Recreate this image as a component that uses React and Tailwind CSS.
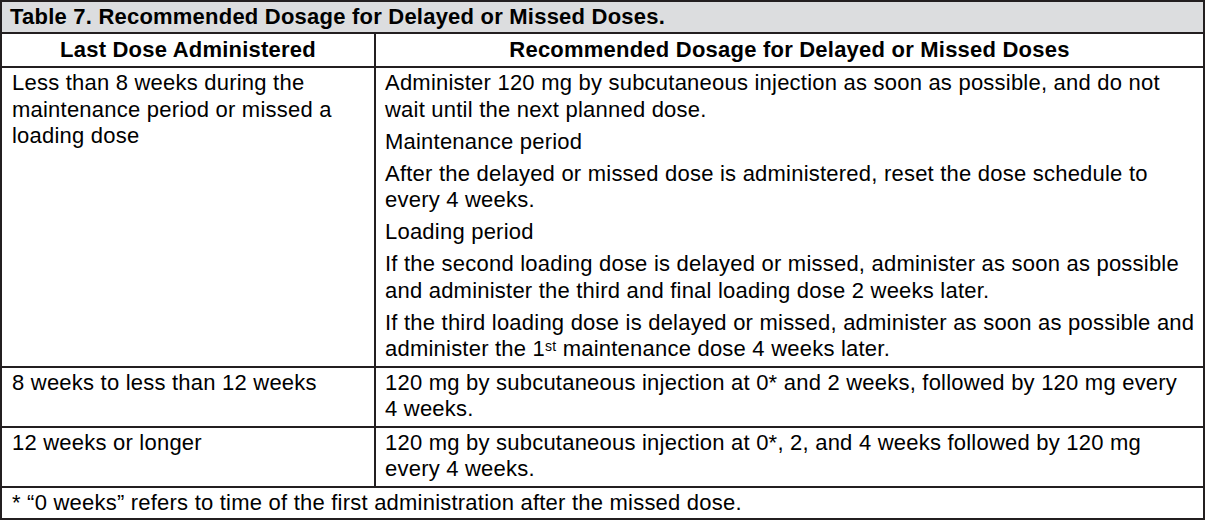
import React from 'react';

// each cell holds paragraphs, each paragraph holds its printed lines
const rows = [
  {
    left: [['Less than 8 weeks during the', 'maintenance period or missed a', 'loading dose']],
    right: [
      ['Administer 120 mg by subcutaneous injection as soon as possible, and do not', 'wait until the next planned dose.'],
      ['Maintenance period'],
      ['After the delayed or missed dose is administered, reset the dose schedule to', 'every 4 weeks.'],
      ['Loading period'],
      ['If the second loading dose is delayed or missed, administer as soon as possible', 'and administer the third and final loading dose 2 weeks later.'],
      ['If the third loading dose is delayed or missed, administer as soon as possible and', 'first-maint'],
    ],
  },
  {
    left: [['8 weeks to less than 12 weeks']],
    right: [['120 mg by subcutaneous injection at 0* and 2 weeks, followed by 120 mg every', '4 weeks.']],
  },
  {
    left: [['12 weeks or longer']],
    right: [['120 mg by subcutaneous injection at 0*, 2, and 4 weeks followed by 120 mg', 'every 4 weeks.']],
  },
];

const Line = ({ text }) => {
  if (text === 'first-maint') {
    return (
      <div className="whitespace-nowrap">
        administer the 1
        <span className="text-[14px] leading-none align-top relative top-[3px]">st</span> maintenance dose 4 weeks later.
      </div>
    );
  }
  return <div className="whitespace-nowrap">{text}</div>;
};

const Cell = ({ paras, className }) => (
  <div className={`pt-[2px] pb-[3px] flex flex-col gap-[5.5px] ${className}`}>
    {paras.map((lines, j) => (
      <div key={j}>
        {lines.map((l, k) => (
          <Line key={k} text={l} />
        ))}
      </div>
    ))}
  </div>
);

export default function App() {
  return (
    <div className="w-[1205px] h-[520px] bg-white text-black" style={{ fontFamily: '"Liberation Sans", Arial, sans-serif' }}>
      <div className="border-2 border-[#231f20] text-[22px] leading-[26.5px] tracking-[0.22px]">
        {/* Title */}
        <div className="bg-[#dcdddf] border-b-2 border-[#231f20] h-[32px] px-[8px] flex items-center font-bold">
          Table 7. Recommended Dosage for Delayed or Missed Doses.
        </div>

        {/* Header */}
        <div className="grid grid-cols-[374px_1fr] border-b-2 border-[#231f20] font-bold">
          <div className="h-[32px] flex items-center justify-center border-r-2 border-[#231f20]">
            Last Dose Administered
          </div>
          <div className="h-[32px] flex items-center justify-center">
            Recommended Dosage for Delayed or Missed Doses
          </div>
        </div>

        {/* Body rows */}
        {rows.map((row, i) => (
          <div key={i} className="grid grid-cols-[374px_1fr] border-b-2 border-[#231f20]">
            <Cell paras={row.left} className="border-r-2 border-[#231f20] pl-[10px]" />
            <Cell paras={row.right} className="pl-[9px]" />
          </div>
        ))}

        {/* Footnote */}
        <div className="pl-[10px] pt-[2px] pb-[2px]">
          * “0 weeks” refers to time of the first administration after the missed dose.
        </div>
      </div>
    </div>
  );
}
